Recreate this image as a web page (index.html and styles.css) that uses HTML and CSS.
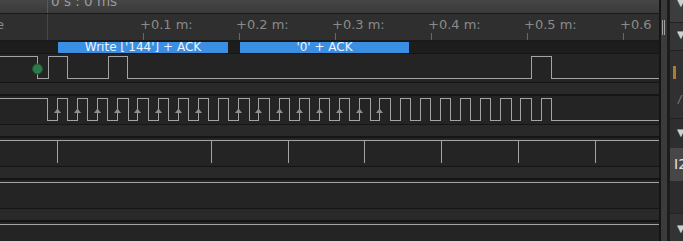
FILE: index.html
```html
<!DOCTYPE html>
<html>
<head>
<meta charset="utf-8">
<link rel="stylesheet" href="styles.css">
</head>
<body>
<div class="app">
  <div class="main">
    <div class="header">
      <div class="lead"></div>
      <div class="cursor-time">0 s : 0 ms</div>
    </div>
    <div class="ruler">
      <div class="lead"><span class="cut-label">e</span></div>
      <div class="ruler-gap"></div>
      <div class="tick-cell"><span class="tick-label">+0.1 m:</span><span class="tick"></span></div>
      <div class="tick-cell"><span class="tick-label">+0.2 m:</span><span class="tick"></span></div>
      <div class="tick-cell"><span class="tick-label">+0.3 m:</span><span class="tick"></span></div>
      <div class="tick-cell"><span class="tick-label">+0.4 m:</span><span class="tick"></span></div>
      <div class="tick-cell"><span class="tick-label">+0.5 m:</span><span class="tick"></span></div>
      <div class="tick-cell"><span class="tick-label">+0.6</span><span class="tick"></span></div>
    </div>
    <div class="decoder">
      <div class="frame frame-a">Write ['144'] + ACK</div>
      <div class="frame frame-b">'0' + ACK</div>
    </div>

    <div class="channel first">
      <div class="area">
        <svg class="wave" width="659" height="28" viewBox="0 0 659 28">
          <path d="M0 2.5H37.5V24.5H48.5V2.5H67.5V24.5H108.5V2.5H127.5V24.5H531.5V2.5H551.5V24.5H659"/>
          <circle class="start" cx="37.5" cy="15" r="5"/>
        </svg>
      </div>
      <div class="strip"></div>
    </div>

    <div class="channel">
      <div class="area">
        <svg class="wave" width="659" height="28" viewBox="0 0 659 28">
          <path d="M0 2.5H47.5V24.5H57.5V2.5H67.5V24.5H77.5V2.5H87.5V24.5H97.5V2.5H107.5V24.5H117.5V2.5H128.5V24.5H137.5V2.5H148.5V24.5H158.5V2.5H168.5V24.5H178.5V2.5H188.5V24.5H198.5V2.5H208.5V24.5H218.5V2.5H228.5V24.5H238.5V2.5H249.5V24.5H258.5V2.5H269.5V24.5H279.5V2.5H289.5V24.5H299.5V2.5H309.5V24.5H319.5V2.5H329.5V24.5H339.5V2.5H349.5V24.5H359.5V2.5H370.5V24.5H379.5V2.5H390.5V24.5H400.5V2.5H410.5V24.5H420.5V2.5H430.5V24.5H440.5V2.5H450.5V24.5H460.5V2.5H470.5V24.5H480.5V2.5H490.5V24.5H500.5V2.5H511.5V24.5H520.5V2.5H531.5V24.5H541.5V2.5H551.5V24.5H659"/>
          <g class="arrows">
            <polygon points="54,17 61,17 57.5,12.5"/>
            <polygon points="74,17 81,17 77.5,12.5"/>
            <polygon points="94,17 101,17 97.5,12.5"/>
            <polygon points="114,17 121,17 117.5,12.5"/>
            <polygon points="134,17 141,17 137.5,12.5"/>
            <polygon points="155,17 162,17 158.5,12.5"/>
            <polygon points="175,17 182,17 178.5,12.5"/>
            <polygon points="195,17 202,17 198.5,12.5"/>
            <polygon points="235,17 242,17 238.5,12.5"/>
            <polygon points="255,17 262,17 258.5,12.5"/>
            <polygon points="276,17 283,17 279.5,12.5"/>
            <polygon points="296,17 303,17 299.5,12.5"/>
            <polygon points="316,17 323,17 319.5,12.5"/>
            <polygon points="336,17 343,17 339.5,12.5"/>
            <polygon points="356,17 363,17 359.5,12.5"/>
            <polygon points="376,17 383,17 379.5,12.5"/>
          </g>
        </svg>
      </div>
      <div class="strip"></div>
    </div>

    <div class="channel">
      <div class="area">
        <svg class="wave" width="659" height="28" viewBox="0 0 659 28">
          <path d="M0 2.5H659M57.5 2.5V24.5M211.5 2.5V24.5M288.5 2.5V24.5M364.5 2.5V24.5M441.5 2.5V24.5M518.5 2.5V24.5M595.5 2.5V24.5"/>
        </svg>
      </div>
      <div class="strip"></div>
    </div>

    <div class="channel">
      <div class="area">
        <svg class="wave" width="659" height="28" viewBox="0 0 659 28">
          <path d="M0 2.5H659"/>
        </svg>
      </div>
      <div class="strip"></div>
    </div>

    <div class="channel">
      <div class="area">
        <svg class="wave" width="659" height="28" viewBox="0 0 659 28">
          <path d="M0 2.5H659"/>
        </svg>
      </div>
      <div class="strip"></div>
    </div>
  </div>

  <div class="vsep"></div>
  <div class="scroll-col"><div class="grip"></div></div>
  <div class="vborder"></div>

  <div class="side">
    <div class="sec sec-a"><span class="caret caret-top">▼</span></div>
    <div class="sec sec-b"><span class="caret">▼</span></div>
    <div class="sec sec-c"><span class="swatch"></span><span class="slash">/</span></div>
    <div class="sec sec-d"><span class="caret">▼</span></div>
    <div class="sec sec-e"><span class="proto">I2C</span></div>
    <div class="sec sec-f"></div>
    <div class="sec sec-g"><span class="caret">▼</span></div>
  </div>
</div>
</body>
</html>
```

FILE: styles.css
```css
html, body {
  margin: 0;
  padding: 0;
  background: #1b1b1b;
  overflow: hidden;
}

.app {
  display: flex;
  width: 683px;
  height: 241px;
  overflow: hidden;
  font-family: "DejaVu Sans", sans-serif;
}

.main {
  width: 659px;
  flex-shrink: 0;
  display: flex;
  flex-direction: column;
  overflow: hidden;
  background: #242424;
}

/* header */
.header {
  height: 13px;
  flex-shrink: 0;
  display: flex;
  overflow: hidden;
  background: linear-gradient(#464646, #3a3a3a);
  border-bottom: 1px solid #1a1a1a;
}
.header .lead {
  width: 47px;
  flex-shrink: 0;
  border-right: 1px solid #585858;
}
.cursor-time {
  margin-left: 3px;
  margin-top: -6px;
  font-size: 13.5px;
  line-height: 15px;
  color: #9a9a9a;
  white-space: nowrap;
}

/* ruler */
.ruler {
  height: 26px;
  flex-shrink: 0;
  display: flex;
  overflow: hidden;
  background: #2f2f2f;
  border-bottom: 2px solid #1a1a1a;
}
.ruler .lead {
  width: 47px;
  flex-shrink: 0;
  border-right: 1px solid #474747;
  overflow: hidden;
}
.cut-label {
  display: block;
  margin-left: -4px;
  padding-top: 3px;
  font-size: 13px;
  line-height: 15px;
  color: #8a8a8a;
}
.ruler-gap {
  width: 95px;
  flex-shrink: 0;
}
.tick-cell {
  width: 96px;
  flex-shrink: 0;
  display: flex;
  flex-direction: column;
  align-items: flex-start;
}
.tick-label {
  margin-left: -3px;
  padding-top: 3px;
  font-size: 13px;
  line-height: 15px;
  color: #8a8a8a;
  white-space: nowrap;
}
.tick {
  margin-top: auto;
  width: 1px;
  height: 7px;
  background: #676767;
}

/* decoder row */
.decoder {
  height: 11px;
  flex-shrink: 0;
  display: flex;
  background: #1d1d1d;
}
.frame {
  height: 11px;
  flex-shrink: 0;
  background: #3a8fe3;
  color: #eef4ff;
  font-size: 12px;
  line-height: 11px;
  text-align: center;
  white-space: nowrap;
  overflow: hidden;
}
.frame-a {
  margin-left: 58px;
  width: 170px;
}
.frame-b {
  margin-left: 12px;
  width: 169px;
}

/* channels */
.channel {
  flex-shrink: 0;
  border-top: 2px solid #151515;
}
.channel.first {
  border-top-width: 1px;
}
.area {
  height: 28px;
  background: #242424;
  border-bottom: 1px solid #151515;
}
.strip {
  height: 11px;
  background: #292929;
}
.wave {
  display: block;
}
.wave path {
  fill: none;
  stroke: #a4a4a4;
  stroke-width: 1;
  shape-rendering: crispEdges;
}
.wave .start {
  fill: #2d7a4b;
  stroke: #1e5534;
  stroke-width: 1;
}
.arrows polygon {
  fill: #8e8e8e;
}

/* right edge */
.vsep {
  width: 2px;
  flex-shrink: 0;
  background: #151515;
}
.scroll-col {
  width: 6px;
  flex-shrink: 0;
  background: #3b3b3b;
}
.grip {
  margin-top: 20px;
  margin-left: 1px;
  width: 1px;
  height: 15px;
  border-left: 1px solid #a0a0a0;
  border-right: 1px solid #a0a0a0;
}
.vborder {
  width: 3px;
  flex-shrink: 0;
  background: #1c1c1c;
}

.side {
  width: 13px;
  flex-shrink: 0;
  display: flex;
  flex-direction: column;
  overflow: hidden;
  background: #333333;
}
.sec {
  flex-shrink: 0;
  overflow: hidden;
  white-space: nowrap;
}
.caret {
  display: block;
  padding-left: 7px;
  font-size: 10px;
  line-height: 10px;
  color: #cfcfcf;
}
.sec-a {
  height: 22px;
  background: #3d3d3d;
  border-bottom: 1px solid #222222;
}
.caret-top {
  margin-top: -2px;
}
.sec-b {
  height: 27px;
  padding-top: 0;
  background: #353535;
  border-bottom: 1px solid #222222;
}
.sec-b .caret {
  margin-top: 7px;
}
.sec-c {
  height: 67px;
  background: #303030;
  border-bottom: 1px solid #222222;
  position: relative;
}
.swatch {
  display: block;
  margin-left: 3px;
  margin-top: 15px;
  width: 3px;
  height: 13px;
  background: #a97a3a;
}
.slash {
  display: block;
  margin-left: 8px;
  margin-top: 16px;
  font-size: 10px;
  line-height: 10px;
  color: #8a8a8a;
  font-style: italic;
}
.sec-d {
  height: 29px;
  background: #2e2e2e;
}
.sec-d .caret {
  margin-top: 9px;
}
.sec-e {
  height: 33px;
  background: #474747;
}
.proto {
  display: block;
  margin-left: 4px;
  margin-top: 8px;
  font-size: 14px;
  line-height: 16px;
  color: #e2e2e2;
}
.sec-f {
  height: 32px;
  background: #2c2c2c;
  border-bottom: 1px solid #222222;
}
.sec-g {
  flex: 1;
  background: #333333;
}
.sec-g .caret {
  margin-top: 10px;
}
```
